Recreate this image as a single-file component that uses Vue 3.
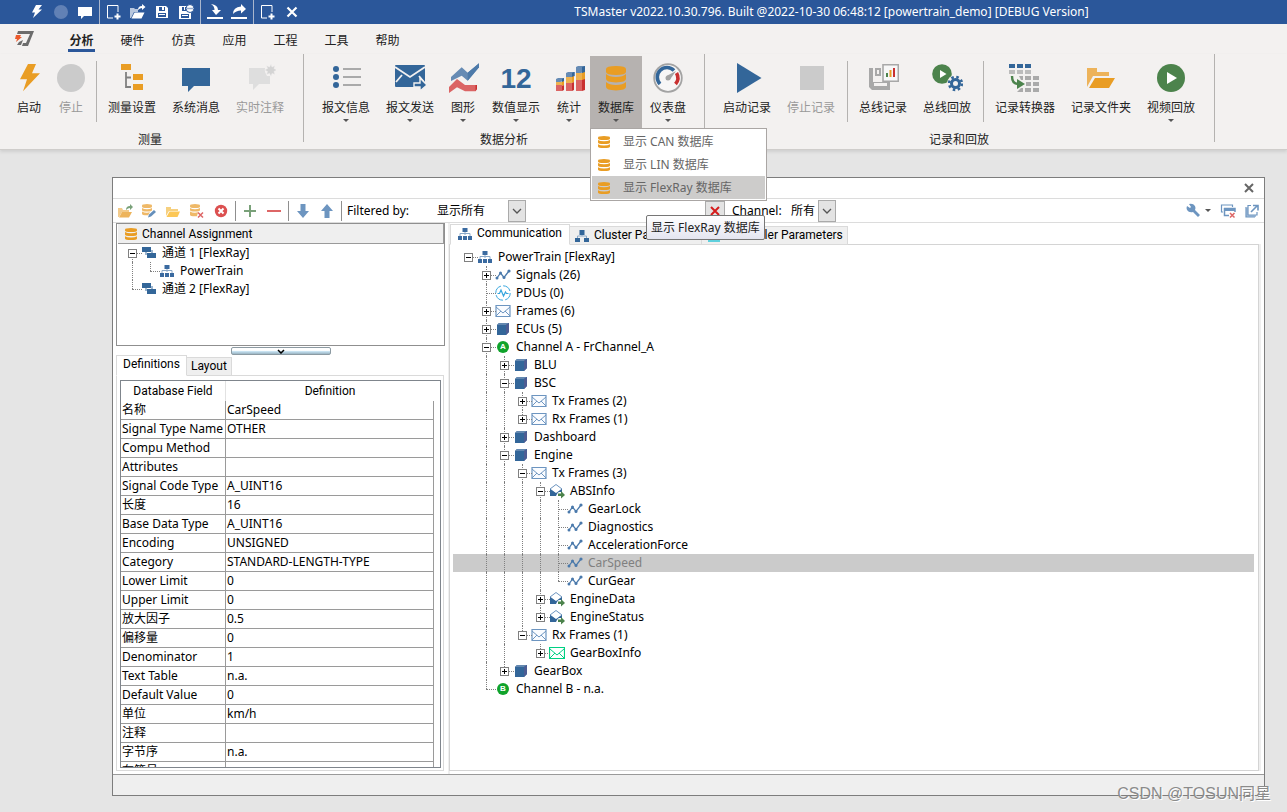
<script setup>
import { ref } from 'vue'

const quickGroups = [
  [['q-bolt', '启动'], ['q-dot', '停止'], ['q-chat', '消息']],
  [['q-new', '新建'], ['q-open', '打开'], ['q-save', '保存'], ['q-saveas', '另存为']],
  [['q-import', '导入'], ['q-export', '导出']],
  [['q-new', '新建窗口'], ['q-close', '关闭']],
]

const menus = ['分析', '硬件', '仿真', '应用', '工程', '工具', '帮助']

const ribbon = [
  {
    title: '测量',
    cls: 'g-measure',
    sections: [
      [
        { label: '启动', icon: 'r-bolt', size: 's2' },
        { label: '停止', icon: 'r-stop', size: 's2', off: true },
      ],
      [
        { label: '测量设置', icon: 'r-tree', size: 's4' },
        { label: '系统消息', icon: 'r-chat', size: 's4' },
        { label: '实时注释', icon: 'r-note', size: 's4', off: true },
      ],
    ],
  },
  {
    title: '数据分析',
    cls: 'g-data',
    sections: [
      [
        { label: '报文信息', icon: 'r-list', size: 's4', drop: true },
        { label: '报文发送', icon: 'r-mail', size: 's4', drop: true },
        { label: '图形', icon: 'r-graph', size: 's2', drop: true },
        { label: '数值显示', digits: '12', size: 's4', drop: true },
        { label: '统计', icon: 'r-stat', size: 's2', drop: true },
        { label: '数据库', icon: 'r-db', size: 's3', drop: true, open: true },
        { label: '仪表盘', icon: 'r-gauge', size: 's3', drop: true },
      ],
    ],
  },
  {
    title: '记录和回放',
    cls: 'g-record',
    sections: [
      [
        { label: '启动记录', icon: 'r-play', size: 's4' },
        { label: '停止记录', icon: 'r-square', size: 's4', off: true },
      ],
      [
        { label: '总线记录', icon: 'r-buslog', size: 's4' },
        { label: '总线回放', icon: 'r-replay', size: 's4' },
      ],
      [
        { label: '记录转换器', icon: 'r-convert', size: 's5' },
        { label: '记录文件夹', icon: 'r-folder', size: 's5' },
        { label: '视频回放', icon: 'r-video', size: 's4', drop: true },
      ],
    ],
  },
]

const dbMenu = ['显示 CAN 数据库', '显示 LIN 数据库', '显示 FlexRay 数据库']

const toolGroups = [
  [['t-open', '打开'], ['t-dbedit', '编辑数据库'], ['t-folder', '文件夹'], ['t-dbdel', '移除数据库'], ['t-cancel', '清空']],
  [['t-plus', '添加'], ['t-minus', '删除']],
  [['t-down', '下移'], ['t-up', '上移']],
]

const node = (label, icon, children = null, open = true) => ({ label, icon, children, open })

const channelRoots = [
  node('通道 1 [FlexRay]', 'i-chan', [node('PowerTrain', 'i-net')]),
  node('通道 2 [FlexRay]', 'i-chan'),
]

const closed = (label, icon) => node(label, icon, [], false)

const dbRoots = [
  node('PowerTrain [FlexRay]', 'i-net', [
    closed('Signals (26)', 'i-sig'),
    node('PDUs (0)', 'i-pdu'),
    closed('Frames (6)', 'i-mail'),
    closed('ECUs (5)', 'i-ecu'),
    node('Channel A - FrChannel_A', 'A', [
      closed('BLU', 'i-ecu'),
      node('BSC', 'i-ecu', [closed('Tx Frames (2)', 'i-mail'), closed('Rx Frames (1)', 'i-mail')]),
      closed('Dashboard', 'i-ecu'),
      node('Engine', 'i-ecu', [
        node('Tx Frames (3)', 'i-mail', [
          node('ABSInfo', 'i-tx', [
            node('GearLock', 'i-sig'),
            node('Diagnostics', 'i-sig'),
            node('AccelerationForce', 'i-sig'),
            node('CarSpeed', 'i-sig'),
            node('CurGear', 'i-sig'),
          ]),
          closed('EngineData', 'i-tx'),
          closed('EngineStatus', 'i-tx'),
        ]),
        node('Rx Frames (1)', 'i-mail', [closed('GearBoxInfo', 'i-rx')]),
      ]),
      closed('GearBox', 'i-ecu'),
    ]),
    node('Channel B - n.a.', 'B'),
  ]),
]

// Turns nested nodes into rows, each with the guide lines of its ancestors.
// A one-letter icon is drawn as a round channel badge.
function flatten(nodes, depth = 0, guides = [], out = []) {
  nodes.forEach((n, i) => {
    const last = i === nodes.length - 1
    out.push({
      label: n.label,
      icon: n.icon,
      guides,
      up: depth > 0 || i > 0,
      down: !last,
      lead: nodes.length > 1 || depth > 0 || !!n.children,
      toggle: n.children ? (n.open ? 'minus' : 'plus') : '',
    })
    if (n.children && n.open) flatten(n.children, depth + 1, [...guides, !last], out)
  })
  return out
}

const channelRows = flatten(channelRoots)
const dbRows = flatten(dbRoots)
const selected = ref('CarSpeed')

const fields = [
  ['名称', 'CarSpeed'],
  ['Signal Type Name', 'OTHER'],
  ['Compu Method', ''],
  ['Attributes', ''],
  ['Signal Code Type', 'A_UINT16'],
  ['长度', '16'],
  ['Base Data Type', 'A_UINT16'],
  ['Encoding', 'UNSIGNED'],
  ['Category', 'STANDARD-LENGTH-TYPE'],
  ['Lower Limit', '0'],
  ['Upper Limit', '0'],
  ['放大因子', '0.5'],
  ['偏移量', '0'],
  ['Denominator', '1'],
  ['Text Table', 'n.a.'],
  ['Default Value', '0'],
  ['单位', 'km/h'],
  ['注释', ''],
  ['字节序', 'n.a.'],
  ['有符号', ''],
]
</script>

<template>
  <div class="app">
    <svg class="sprite" aria-hidden="true">
      <!-- quick access, 16px -->
      <symbol id="q-bolt" viewBox="0 0 16 16"><path d="M7 1h6L9.500 5.500h3.500L4 14l2-5.500H3z" fill="#fff" /></symbol>
      <symbol id="q-dot" viewBox="0 0 16 16"><circle cx="8" cy="8" r="7" fill="#6181b5" /></symbol>
      <symbol id="q-chat" viewBox="0 0 16 16"><path d="M1 3h14v9H7l-3 3v-3H1z" fill="#fff" /></symbol>
      <symbol id="q-new" viewBox="0 0 16 16"><path d="M7 14H1.500V1.500h10.500V8" fill="none" stroke="#fff" /><path d="M11.500 9.500v6M8.500 12.500h6" stroke="#fff" stroke-width="2" /></symbol>
      <symbol id="q-open" viewBox="0 0 16 16"><path d="M0 4h4l1 1h3v3H4l-3 6H0z" fill="#b8c7de" /><path d="M4.500 8.500h10l-3 6H1.500z" fill="#fff" /><path d="M8 6q0-4 4-4V0l3.500 3L12 6V4q-2 0-4 2z" fill="#fff" /></symbol>
      <symbol id="q-save" viewBox="0 0 16 16"><path d="M2 2h10l2 2v10H2z" fill="#fff" /><path d="M5 3h6v4H5zM4 9h8v4H4z" fill="#2b579a" /><path d="M8 3h2v3H8zM5 10h6v1H5z" fill="#fff" /></symbol>
      <symbol id="q-saveas" viewBox="0 0 16 16"><path d="M1 2h10v6h2v7H1z" fill="#fff" /><path d="M4 3h4v4H4zM3 10h8v4H3z" fill="#2b579a" /><path d="M6 3h1v3H6zM4 11h6v1H4z" fill="#fff" /><circle cx="12" cy="4.500" r="4" fill="#fff" stroke="#2b579a" /><path d="M9.500 4.500h1M11.500 4.500h1M13.500 4.500h1" stroke="#2b579a" stroke-width="1.300" /></symbol>
      <symbol id="q-import" viewBox="0 0 16 16"><path d="M0 13h16v2H0z" fill="#fff" /><path d="M4 0q7 1 7 6h3l-5 5-4-5h2.500q0-4-3.500-6z" fill="#fff" /></symbol>
      <symbol id="q-export" viewBox="0 0 16 16"><path d="M0 13h16v2H0z" fill="#fff" /><path d="M2 10q0-7 8-7.500V0l5 5-5 4.500V6.500Q5 6.500 2 10z" fill="#fff" /></symbol>
      <symbol id="q-close" viewBox="0 0 16 16"><path d="M3.500 3.500l9 9M12.500 3.500l-9 9" stroke="#fff" stroke-width="2.200" /></symbol>

      <!-- ribbon, 32px -->
      <symbol id="r-bolt" viewBox="0 0 32 32"><path d="M15 2h8l-4 9.300h8L10 29.300l4-12H7z" fill="#e99d24" /></symbol>
      <symbol id="r-stop" viewBox="0 0 32 32"><circle cx="16" cy="16" r="14" fill="#cbcbcb" /></symbol>
      <symbol id="r-tree" viewBox="0 0 32 32"><path d="M5 2h10v6H5zM17 12h10v6H17zM17 22h10v6H17z" fill="#e99d24" /><path d="M10 10v15h5M10 15.500h5" fill="none" stroke="#808080" stroke-width="1.800" /></symbol>
      <symbol id="r-chat" viewBox="0 0 32 32"><path d="M2 6h28v18H14l-6 6v-6H2z" fill="#336699" /></symbol>
      <symbol id="r-note" viewBox="0 0 32 32"><path d="M5 6h16v4l2 4h6v8H15l-6 6v-6H5z" fill="#dedede" /><path d="M29 14v8h-3v-8z" fill="#f3f1f0" /><path d="M27 2l1 3 3-1.500-1 3 3 1.500-3 1.500 1 3-3-1-1 3-1.500-3-3 1 1-3-3-1.500 3-1.500-1-3 3 1.500z" fill="#d4d4d4" stroke="#f3f1f0" stroke-width=".5" /></symbol>
      <symbol id="r-list" viewBox="0 0 32 32"><g fill="#336699"><circle cx="6" cy="7" r="3" /><circle cx="6" cy="15" r="3" /><circle cx="6" cy="23" r="3" /></g><path d="M13 7h18M13 15h18M13 23h18" stroke="#aaa" stroke-width="2" /></symbol>
      <symbol id="r-mail" viewBox="0 0 32 32"><rect x="1" y="3" width="30" height="22" rx="1" fill="#336699" /><path d="M1 5l15 10L31 5M2 20l6-7 M30 20l-5-6" fill="none" stroke="#f3f1f0" stroke-width="1.800" /><path d="M20 21h6v-5l7 7-7 6v-4h-6z" fill="#336699" stroke="#f3f1f0" stroke-width="1.400" /></symbol>
      <symbol id="r-graph" viewBox="0 0 32 32"><path d="M4 15L14.700 5.300l6 5.400L32 1.300v4L20.700 18.700l-6-5L4 19z" fill="#668bb4" /><path d="M20.700 10.700L32 1.300v4L20.700 18.700z" fill="#4d7aa9" /><path d="M2 25l8-8 8 6h12v4l-1.500 2.300H18l-8-4L2 31z" fill="#db6464" /><path d="M28.500 23H30v4l-1.500 2.300z" fill="#c93030" /></symbol>
      <symbol id="r-stat" viewBox="0 0 32 32">
        <path d="M3 17l2-1h6v3l-8 2zM13 11l2-1h7v4l-9 3zM23 5l2-1h7v6l-9 2z" fill="#668bb4" />
        <path d="M3 20h6v4H3zM13 15h6v6h-6zM23 11h6v8h-6z" fill="#edb14f" />
        <path d="M3 23h6v6H3zM13 21h6v8h-6zM23 18h6v11h-6z" fill="#db6464" />
        <path d="M9 17l2-1v4l-2 1zM19 11l2-1v5l-2 1zM29 5l3-1v7l-3 1z" fill="#336699" />
        <path d="M9 20l2-1v4l-2 1zM19 15l2-1v6l-2 1zM29 11l3-1v8l-3 1z" fill="#e99d24" />
        <path d="M9 24l2-1v5l-2 1zM19 21l2-1v8l-2 1zM29 18l3-1v11l-3 1z" fill="#c93030" />
      </symbol>
      <symbol id="r-db" viewBox="0 0 32 32"><g fill="#e99d24"><path d="M6 7q0-3 10-3t10 3v3q0 3-10 3T6 10z" /><path d="M6 12q3 3 10 3t10-3v5q0 3-10 3.500Q6 20 6 17z" /><path d="M6 20q3 3 10 3t10-3v5q0 3-10 3.500Q6 28 6 25z" /></g></symbol>
      <symbol id="r-gauge" viewBox="0 0 32 32"><circle cx="16" cy="16" r="13.800" fill="#f7f6f6" stroke="#a3a3a3" stroke-width="1.800" /><path d="M8 22A9.500 9.500 0 0 1 22 8.500" fill="none" stroke="#336699" stroke-width="3.600" /><path d="M24.500 11A9.500 9.500 0 0 1 23.500 22" fill="none" stroke="#c93030" stroke-width="3.600" /><path d="M14.500 14L24 9l-6 8.500z" fill="#a3a3a3" /><circle cx="16" cy="16" r="2.500" fill="#a3a3a3" /></symbol>
      <symbol id="r-play" viewBox="0 0 32 32"><path d="M6 1l24.500 15L6 31z" fill="#336699" /></symbol>
      <symbol id="r-square" viewBox="0 0 32 32"><path d="M5 4h24v24H5z" fill="#cbcbcb" /></symbol>
      <symbol id="r-buslog" viewBox="0 0 32 32"><path d="M2 6h4v14h17v8H5l-3-3zM8 6h6v8H8z" fill="#a8a8a8" /><path d="M10 8h2v4h-2zM7 21h13v3H7z" fill="#f3f1f0" /><path d="M16 2.800h15.300v16.500H16z" fill="#f7f7f7" stroke="#a8a8a8" stroke-width="1.600" /><path d="M19 11h2v4h-2z" fill="#4c834c" /><path d="M22.500 8h2v7h-2z" fill="#e99d24" /><path d="M26 6h2v9h-2z" fill="#c93030" /></symbol>
      <symbol id="r-replay" viewBox="0 0 32 32"><circle cx="11" cy="12" r="9.800" fill="#4c834c" /><path d="M9 8l6.500 4L9 16z" fill="#fff" /><circle cx="24.500" cy="21.500" r="8.500" fill="#f3f1f0" /><circle cx="24.500" cy="21.500" r="6.400" fill="none" stroke="#336699" stroke-width="2.600" stroke-dasharray="2.500 2.526" /><circle cx="24.500" cy="21.500" r="4" fill="none" stroke="#336699" stroke-width="3" /></symbol>
      <symbol id="r-convert" viewBox="0 0 32 32"><path d="M0 2h6v4H0zM8 2h6v4H8zM16 2h6v4h-6z" fill="#336699" /><path d="M0 8h6v4H0zM8 8h6v4H8zM16 8h6v4h-6z" fill="#bcbcbc" /><path d="M10 14h4v4h-2zM16 14h6v4h-6zM24 14h6v4h-6zM17 20h5v4h-5zM24 20h6v4h-6zM8 30l4-4h2v4zM16 26h6v4h-6zM24 26h6v4h-6z" fill="#aaa" /><path d="M3 14q0 8 6 8" fill="none" stroke="#4c834c" stroke-width="2.400" /><path d="M8 17l8 5-8 5z" fill="#4c834c" /></symbol>
      <symbol id="r-folder" viewBox="0 0 32 32"><path d="M2 6h10v4h12v4H8L2 25z" fill="#edb35a" /><path d="M10 16h20l-6 10H4z" fill="#e99d24" /></symbol>
      <symbol id="r-video" viewBox="0 0 32 32"><circle cx="16" cy="16" r="14" fill="#4c834c" /><path d="M12 10l10 6-10 6z" fill="#fff" /></symbol>

      <!-- database toolbar and trees, 16px -->
      <symbol id="i-db" viewBox="0 0 16 16"><g fill="#e99d24"><path d="M2 3.500Q2 2 8 2t6 1.500v1Q14 6 8 6T2 4.500z" /><path d="M2 6q2 1.200 6 1.200T14 6v2.500q0 1.500-6 1.500T2 8.500z" /><path d="M2 10.200q2 1.200 6 1.200t6-1.200v2.300q0 1.500-6 1.500t-6-1.500z" /></g></symbol>
      <symbol id="t-open" viewBox="0 0 16 16"><path d="M1 5h4l1 2h6v2H5l-3 5H1z" fill="#f2ca8a" /><path d="M5 9h10l-3 5.500H2z" fill="#edb45c" /><path d="M9 7q0-4 4-4V1l3 3-3 3V5q-2 0-4 2z" fill="#79a179" /></symbol>
      <symbol id="t-dbedit" viewBox="0 0 16 16"><g fill="#efb968"><path d="M1 2.500Q1 1 6 1t5 1.500v1Q11 5 6 5T1 3.500z" /><path d="M1 5q2 1.200 5 1.200T11 5v2q0 1.500-5 1.500T1 7z" /><path d="M1 8.500q2 1.200 5 1.200l3-.5-2 3H6q-5 0-5-1.500z" /></g><path d="M7 14.500l1-3L13 7l2 2-5 4.500z" fill="#658fbb" /></symbol>
      <symbol id="t-folder" viewBox="0 0 16 16"><path d="M1 4h5v2h7v2H4l-3 5z" fill="#f6d07f" /><path d="M4.500 8.500H15L12.500 14H1.500z" fill="#fcc756" /></symbol>
      <symbol id="t-dbdel" viewBox="0 0 16 16"><g fill="#efb968"><path d="M1 2.500Q1 1 6 1t5 1.500v1Q11 5 6 5T1 3.500z" /><path d="M1 5q2 1.200 5 1.200T11 5v2q0 1.500-5 1.500T1 7z" /><path d="M1 8.500q2 1.200 5 1.200l3-.5-1 4H6q-5 0-5-1.500z" /></g><path d="M9 9.500l5 5M14 9.500l-5 5" stroke="#d66" stroke-width="1.500" /></symbol>
      <symbol id="t-cancel" viewBox="0 0 16 16"><circle cx="8" cy="8" r="6.200" fill="#dc5050" /><path d="M5.500 5.500l5 5M10.500 5.500l-5 5" stroke="#fff" stroke-width="2" /></symbol>
      <symbol id="t-plus" viewBox="0 0 16 16"><path d="M8 2v12M2 8h12" stroke="#79a179" stroke-width="2" /></symbol>
      <symbol id="t-minus" viewBox="0 0 16 16"><path d="M1 8h14" stroke="#d66" stroke-width="2" /></symbol>
      <symbol id="t-down" viewBox="0 0 16 16"><path d="M5.500 1h5v7H14l-6 7-6-7h3.500z" fill="#6d95c0" /></symbol>
      <symbol id="t-up" viewBox="0 0 16 16"><path d="M5.500 15h5V8H14L8 1 2 8h3.500z" fill="#6d95c0" /></symbol>
      <symbol id="t-wrench" viewBox="0 0 16 16"><path d="M2 3l3 2 1-1-2-3q4-1 6 2 1 2 0 4l5 5-2 2-5-5q-4 1-6-2-1-2 0-4z" fill="#6d95c0" /></symbol>
      <symbol id="t-winx" viewBox="0 0 16 16"><path d="M3 9H1.500V2h11V4" fill="none" stroke="#6d95c0" stroke-width="1.200" /><path d="M4 5.500h11V9M4.500 5v7.500H9" fill="none" stroke="#6d95c0" stroke-width="1.500" /><path d="M4 5h11v3H4z" fill="#6d95c0" /><path d="M10 10l4.500 4.500M14.500 10L10 14.500" stroke="#d66" stroke-width="1.500" /></symbol>
      <symbol id="t-pop" viewBox="0 0 16 16"><path d="M4 4v8h8v2H2V5z" fill="#a9c1dc" /><path d="M7 2.500H4v9.500h9V9M2 4v10h9" fill="none" stroke="#6d95c0" stroke-width="1.200" /><path d="M7 9l6-6M9 2.500h5v5" fill="none" stroke="#6d95c0" stroke-width="1.600" /></symbol>
      <symbol id="i-chan" viewBox="0 0 16 16"><path d="M1 2h9v5H1zM6 8h9v5H6z" fill="#336699" /><path d="M10 5h2v3h-2zM4 7h2v3H4z" fill="#9db6cf" /></symbol>
      <symbol id="i-net" viewBox="0 0 16 16"><path d="M8 5v4M3 10V7.500h10V10" fill="none" stroke="#8aa8c8" /><path d="M5.500 2h5v4h-5zM1 10h4v4H1zM6 10h4v4H6zM11 10h4v4h-4z" fill="#3a6aa0" /></symbol>
      <symbol id="i-net2" viewBox="0 0 16 16"><path d="M8 5v3M3.500 10V8h9v2" fill="none" stroke="#8aa8c8" /><path d="M5.500 2h5v5h-5zM1 10h5v4H1zM10 10h5v4h-5z" fill="#336699" /></symbol>
      <symbol id="i-sig" viewBox="0 0 16 16"><path d="M2 11l3.500-5L9 10.500l5-6.500" fill="none" stroke="#4a79ab" stroke-width="1.300" /><g fill="#4a79ab"><circle cx="2" cy="11" r="1.500" /><circle cx="5.500" cy="6" r="1.500" /><circle cx="9" cy="10.500" r="1.500" /><circle cx="14" cy="4" r="1.600" /></g></symbol>
      <symbol id="i-pdu" viewBox="0 0 16 16"><circle cx="8" cy="8" r="7.200" fill="none" stroke="#37a6de" stroke-dasharray="9 2.300" /><path d="M2.500 8.500h2L6 5l2.500 6L10.500 7l1 1.500h2" fill="none" stroke="#37a6de" stroke-width="1.200" /></symbol>
      <symbol id="i-mail" viewBox="0 0 16 16"><path d="M1 2.500h14v11H1z" fill="#fafcff" stroke="#6d95c0" stroke-width="1.200" /><path d="M1 4l7 6 7-6M1 13l5-5M15 13l-5-5" fill="none" stroke="#6d95c0" /></symbol>
      <symbol id="i-rx" viewBox="0 0 16 16"><path d="M.5 2.500h15v11H.5z" fill="#fff" stroke="#00d084" stroke-width="1.200" /><path d="M1 4l7 6 7-6M1 13l5-5M15 13l-5-5" fill="none" stroke="#00d084" /></symbol>
      <symbol id="i-tx" viewBox="0 0 16 16"><path d="M1 6l6-4.500L13 6l-6 5z" fill="#fff" stroke="#6d95c0" /><path d="M1 6l6 4 6-4v3H9l-2 4H1z" fill="#336699" /><path d="M9 10.500h3V8l4 4-4 3.500V13H9z" fill="#4c834c" /></symbol>
      <symbol id="i-ecu" viewBox="0 0 16 16"><path d="M2 4l2-2h10v9l-3 3H2z" fill="#336699" /><path d="M2 4l2-2h10l-3 2z" fill="#6488b0" /><path d="M11 4l3-2v9l-3 3z" fill="#4d5c93" /></symbol>
      <symbol id="i-ctrl" viewBox="0 0 16 16"><path d="M2 3h12v11H2z" fill="#5fd0dd" /></symbol>
      <symbol id="i-chevron" viewBox="0 0 16 16"><path d="M4 6l4 4 4-4" fill="none" stroke="#555" stroke-width="1.300" /></symbol>
    </svg>

    <header class="titlebar">
      <div v-for="(g, gi) in quickGroups" :key="gi" class="quick">
        <button v-for="q in g" :key="q[1]" type="button" :aria-label="q[1]">
          <svg class="i16"><use :href="'#' + q[0]" /></svg>
        </button>
      </div>
      <h1>TSMaster v2022.10.30.796. Built @2022-10-30 06:48:12 [powertrain_demo] [DEBUG Version]</h1>
    </header>

    <nav class="menubar">
      <svg class="logo" viewBox="0 0 20 16" aria-hidden="true">
        <path d="M3 0h16l-6 15H7l1-3h3l4-9H2z" fill="#6c6c6c" />
        <path d="M1 4h5L5 6h2l-6 5 1-3H0z" fill="#ec5a2c" />
        <path d="M4 11l4-2-2 5H2z" fill="#6c6c6c" />
      </svg>
      <button v-for="(m, i) in menus" :key="m" type="button" :class="{ active: i === 0 }"><span>{{ m }}</span></button>
    </nav>

    <section class="ribbon">
      <div v-for="g in ribbon" :key="g.title" class="group" :class="g.cls">
        <div class="sections">
          <div v-for="(s, si) in g.sections" :key="si" class="section">
            <div v-for="b in s" :key="b.label" class="cell" :class="b.size">
              <button type="button" class="big" :class="{ open: b.open }" :disabled="b.off">
                <b v-if="b.digits" class="digits">{{ b.digits }}</b>
                <svg v-else class="i32"><use :href="'#' + b.icon" /></svg>
                <span>{{ b.label }}</span>
                <i v-if="b.drop" class="caret"></i>
              </button>
              <div v-if="b.open" class="popup" role="menu">
                <button v-for="(d, di) in dbMenu" :key="d" type="button" role="menuitem" :class="{ hover: di === 2 }">
                  <svg class="i16"><use href="#i-db" /></svg><span>{{ d }}</span>
                </button>
                <div class="tip" role="tooltip">{{ dbMenu[2] }}</div>
              </div>
            </div>
          </div>
        </div>
        <div class="group-title">{{ g.title }}</div>
      </div>
    </section>

    <main class="desktop">
      <section class="window">
        <div class="caption">
          <button type="button" aria-label="关闭窗口">
            <svg viewBox="0 0 12 12"><path d="M2 2l8 8M10 2l-8 8" stroke="#666" stroke-width="2" /></svg>
          </button>
        </div>

        <div class="toolbar">
          <div v-for="(g, gi) in toolGroups" :key="gi" class="tools">
            <button v-for="t in g" :key="t[0]" type="button" :aria-label="t[1]">
              <svg class="i16"><use :href="'#' + t[0]" /></svg>
            </button>
          </div>
          <label for="filter" class="filter-label">Filtered by:</label>
          <div class="combo filter">
            <select id="filter"><option>显示所有</option></select>
            <svg class="drop"><use href="#i-chevron" /></svg>
          </div>
          <input class="search" type="text" aria-label="过滤" />
          <button type="button" class="clear" aria-label="清除过滤">
            <svg viewBox="0 0 12 12"><path d="M2 2l8 8M10 2l-8 8" stroke="#d51c1c" stroke-width="2" /></svg>
          </button>
          <label for="channel" class="channel-label">Channel:</label>
          <div class="combo channel">
            <select id="channel"><option>所有</option></select>
            <svg class="drop"><use href="#i-chevron" /></svg>
          </div>
          <div class="right-tools">
            <button type="button" class="wrench" aria-label="设置"><svg class="i16"><use href="#t-wrench" /></svg><i class="caret"></i></button>
            <button type="button" aria-label="关闭所有"><svg class="i16"><use href="#t-winx" /></svg></button>
            <button type="button" aria-label="弹出"><svg class="i16"><use href="#t-pop" /></svg></button>
          </div>
        </div>

        <div class="body">
          <aside class="left">
            <div class="channels">
              <div class="channels-head"><svg class="i16"><use href="#i-db" /></svg>Channel Assignment</div>
              <ul class="tree small">
                <li v-for="r in channelRows" :key="r.label">
                  <i v-for="(g, gi) in r.guides" :key="gi" class="guide" :class="{ line: g }"></i>
                  <i class="guide own" :class="{ up: r.up, down: r.down, lead: r.lead }"><b v-if="r.toggle" class="box" :class="r.toggle"></b></i>
                  <svg class="i16"><use :href="'#' + r.icon" /></svg><span>{{ r.label }}</span>
                </li>
              </ul>
            </div>
            <button type="button" class="splitter" aria-label="折叠"><svg viewBox="0 0 8 5"><path d="M1 1l3 3 3-3" fill="none" stroke="#000" stroke-width="1.500" /></svg></button>
            <div class="tabs" role="tablist">
              <button type="button" role="tab" class="on">Definitions</button>
              <button type="button" role="tab">Layout</button>
            </div>
            <div class="sheet">
              <div class="grid">
                <table>
                  <thead><tr><th class="name" scope="col">Database Field</th><th scope="col">Definition</th></tr></thead>
                  <tbody><tr v-for="f in fields" :key="f[0]"><td>{{ f[0] }}</td><td>{{ f[1] }}</td></tr></tbody>
                </table>
              </div>
            </div>
          </aside>

          <section class="right">
            <div class="tabs wide" role="tablist">
              <button type="button" role="tab" class="on"><svg class="i16"><use href="#i-net" /></svg>Communication</button>
              <button type="button" role="tab"><svg class="i16"><use href="#i-net2" /></svg>Cluster Parameters</button>
              <button type="button" role="tab"><svg class="i16"><use href="#i-ctrl" /></svg>Controller Parameters</button>
            </div>
            <div class="tree-pane">
              <ul class="tree">
                <li v-for="(r, ri) in dbRows" :key="ri" :class="{ selected: r.label === selected }" @click="selected = r.label">
                  <i v-for="(g, gi) in r.guides" :key="gi" class="guide" :class="{ line: g }"></i>
                  <i class="guide own" :class="{ up: r.up, down: r.down, lead: r.lead }"><b v-if="r.toggle" class="box" :class="r.toggle"></b></i>
                  <b v-if="r.icon.length === 1" class="badge">{{ r.icon }}</b>
                  <svg v-else class="i16"><use :href="'#' + r.icon" /></svg>
                  <span>{{ r.label }}</span>
                </li>
              </ul>
            </div>
          </section>
        </div>
        <footer class="status"></footer>
      </section>
    </main>
    <div class="mark">CSDN @TOSUN同星</div>
  </div>
</template>

<style>
body { overflow: hidden; }
</style>

<style scoped>
* { box-sizing: border-box; }
.app {
  position: relative;
  height: 100vh;
  display: flex;
  flex-direction: column;
  background: #e5e5e5;
  color: #000;
  font: 12px/18px "Noto Sans", "Noto Sans CJK SC", sans-serif;
}
.sprite { position: absolute; width: 0; height: 0; }
.i16 { width: 16px; height: 16px; flex: none; }
.i32 { width: 32px; height: 32px; flex: none; overflow: visible; }
button { font: inherit; color: inherit; background: none; border: 0; padding: 0; }
svg { display: block; }

.titlebar { display: flex; height: 24px; background: #2b579a; padding-left: 25px; color: #fff; flex: none; }
.quick { display: flex; align-items: center; }
.quick + .quick { border-left: 1px solid #a9b6cd; margin-left: 2px; padding-left: 2px; }
.quick button { width: 24px; height: 24px; display: grid; place-items: center; }
.titlebar h1 { flex: 1; margin: 0; padding-left: 72px; text-align: center; font: inherit; line-height: 24px; white-space: nowrap; }

.menubar { display: flex; height: 30px; padding-left: 15px; background: #f3f1f0; flex: none; }
.logo { width: 20px; height: 16px; margin: 7px 21px 0 0; }
.menubar button { width: 51px; height: 28px; color: #222; display: flex; justify-content: center; }
.menubar span { height: 28px; line-height: 34px; padding: 0 1px; }
.menubar .active span { font-weight: bold; border-bottom: 3px solid #2b579a; }

.ribbon { display: flex; height: 96px; background: #f3f1f0; border-bottom: 1px solid #cfcdcb; box-shadow: 0 2px 3px #cfcfcf; flex: none; color: #222; position: relative; z-index: 2; }
.group { height: 88px; display: flex; flex-direction: column; border-right: 1px solid #b4b2b0; padding: 0 10px; }
.g-measure { padding-left: 8px; padding-right: 11px; }
.g-record { padding-right: 11px; }
.sections { display: flex; height: 74px; }
.section { display: flex; }
.section + .section::before { content: ""; width: 1px; height: 61px; margin: 7px 3px 0 4px; background: #b4b2b0; }
.cell { position: relative; }
.s2 { width: 42px; }
.s3 { width: 52px; }
.s4 { width: 64px; }
.s5 { width: 76px; }
.big { width: 100%; height: 72px; margin-top: 2px; padding-top: 6px; display: flex; flex-direction: column; align-items: center; }
.big span { line-height: 18px; margin-top: 5px; white-space: nowrap; }
.big:disabled { color: #999; }
.big.open { background: #b6b2b0; }
.digits { height: 32px; font: bold 28px/34px "Liberation Sans", Arial, sans-serif; color: #336699; }
.caret { border: 3px solid transparent; border-top-color: #555; border-bottom: 0; width: 0; height: 0; }
.big .caret { margin-top: 2px; }
.group-title { text-align: center; line-height: 18px; margin-top: 3px; }

.popup { position: absolute; top: 74px; left: 0; width: 177px; background: #fff; border: 1px solid #aaa6a4; padding: 1px; z-index: 3; }
.popup button { display: flex; align-items: center; width: 100%; height: 23px; padding-left: 4px; color: #666; white-space: nowrap; }
.popup button span { margin-left: 11px; }
.popup .hover { background: #cdcccb; }
.tip { position: absolute; left: 55px; top: 86px; height: 25px; padding: 0 4px; line-height: 23px; white-space: nowrap; color: #222; background: linear-gradient(#fff, #e4e5f0); border: 1px solid #767676; border-radius: 2px; }

.desktop { flex: 1; min-height: 0; display: flex; padding: 27px 22px 16px 112px; }
.window { flex: 1; min-width: 0; display: flex; flex-direction: column; background: #fff; border: 1px solid #7d7d7d; }
.caption { height: 21px; flex: none; display: flex; justify-content: flex-end; align-items: center; padding-right: 9px; border-bottom: 1px solid #dcdcdc; }
.caption button, .caption svg { width: 12px; height: 12px; }
.toolbar { height: 24px; flex: none; display: flex; align-items: center; border-bottom: 1px solid #dcdcdc; }
.tools { display: flex; align-items: center; height: 20px; padding-right: 2px; border-right: 1px solid #8f8f8f; }
.tools + .tools { padding-left: 2px; }
.tools button, .right-tools button { width: 24px; height: 20px; display: grid; place-items: center; }
.filter-label { margin-left: 5px; width: 89px; white-space: nowrap; }
.channel-label { margin-left: 7px; width: 58px; white-space: nowrap; }
.combo { display: grid; height: 22px; flex: none; }
.combo > * { grid-area: 1 / 1; }
.filter { width: 90px; }
.channel { width: 46px; }
.combo select { appearance: none; font: inherit; color: #000; border: 0; background: #fff; padding: 0 0 0 1px; width: 100%; }
.combo .drop { justify-self: end; width: 18px; height: 22px; padding: 2px 0; background: #e3e3e3; border: 1px solid #aaa; pointer-events: none; }
.search { width: 179px; height: 20px; border: 0; background: #fff; font: inherit; padding: 0; }
.clear { width: 20px; height: 20px; background: #e3e3e3; border: 1px solid #aaa; display: grid; place-items: center; }
.clear svg { width: 12px; height: 12px; }
.right-tools { margin-left: auto; display: flex; }
.right-tools .wrench { width: 36px; display: flex; align-items: center; gap: 4px; padding-left: 5px; }

.body { flex: 1; min-height: 0; display: flex; background: #fff; }
.left { width: 335px; flex: none; display: flex; flex-direction: column; padding: 0 3px 3px; }
.channels { height: 123px; flex: none; border: 1px solid #8f8f8f; }
.channels-head { display: flex; align-items: center; gap: 3px; height: 20px; margin-left: 1px; padding-left: 5px; background: #efefef; border: solid #9a9a9a; border-width: 0 1px 1px 0; font-family: Roboto, sans-serif; }
.splitter { align-self: center; width: 100px; height: 8px; margin-top: 1px; border: 1px solid #8c9aa2; border-radius: 2px; background: linear-gradient(#fff 40%, #c3dfef 60%, #9ab4c2); display: grid; place-items: center; flex: none; }
.splitter svg { width: 8px; height: 5px; }

.tabs { display: flex; align-items: flex-end; height: 21px; flex: none; position: relative; z-index: 1; font-family: Roboto, sans-serif; }
.tabs button { height: 19px; background: #efefef; border: 1px solid #dadada; border-left: 0; padding: 0 4px; line-height: 17px; white-space: nowrap; display: flex; align-items: center; }
.tabs .on { height: 21px; background: #fff; border-left: 1px solid #dadada; border-bottom-color: #fff; padding: 0 6px 2px; }
.sheet { flex: 1; min-height: 0; display: flex; margin-top: -1px; margin-right: 1px; padding: 4px 2px 2px 3px; border: 1px solid #dadada; }
.grid { flex: 1; overflow: hidden; border: 1px solid #7f858c; padding-right: 6px; }
table { width: 100%; table-layout: fixed; border-collapse: separate; border-spacing: 0; }
th { font-weight: normal; height: 20px; padding: 0; line-height: 18px; font-family: Roboto, sans-serif; }
.name { width: 105px; border-right: 1px solid #e2e2e2; }
td { height: 19px; padding: 0 1px; line-height: 18px; border: solid #9a9a9a; border-width: 0 1px 1px 0; white-space: nowrap; }

.right { flex: 1; min-width: 0; display: flex; flex-direction: column; padding: 0 5px 3px 0; border-left: 2px solid #efefef; }
.right .tabs { height: 22px; }
.wide button { padding: 0 4px; }
.wide .on { height: 21px; width: 120px; padding: 0 6px 2px; }
.wide .i16 { margin-right: 4px; }
.tree-pane { flex: 1; min-height: 0; margin-top: -1px; margin-left: -1px; padding: 3px 4px 0 3px; border: 1px solid #d4d4d4; box-shadow: 2px 0 #efefef; }

.tree { list-style: none; margin: 0; padding: 0; }
.tree li { display: flex; align-items: center; height: 18px; padding-left: 6px; white-space: nowrap; }
.tree li > span { margin-left: 5px; }
.tree .selected { background: #cbcbcb; color: #808080; }
.badge { width: 12px; height: 12px; margin: 0 2px; flex: none; border-radius: 50%; background: #10a32b; color: #fff; font: bold 8px/12px "Liberation Sans", Arial, sans-serif; text-align: center; }
.guide { width: 18px; height: 18px; flex: none; display: block; position: relative; }
.guide.line::before, .guide.own::before { content: ""; position: absolute; left: 9px; top: 0; height: 18px; }
.guide.line::before, .guide.up::before, .guide.down::before { border-left: 1px dotted #808080; }
.guide.own.up:not(.down)::before { height: 9px; }
.guide.own.down:not(.up)::before { top: 9px; height: 9px; }
.guide.lead::after { content: ""; position: absolute; left: 9px; top: 9px; width: 10px; border-top: 1px dotted #808080; }
.box { position: absolute; left: 5px; top: 5px; width: 9px; height: 9px; border: 1px solid #808080; background: linear-gradient(#000, #000) center / 5px 1px no-repeat, #fff; z-index: 1; }
.box.plus { background: linear-gradient(#000, #000) center / 5px 1px no-repeat, linear-gradient(#000, #000) center / 1px 5px no-repeat, #fff; }

.status { height: 21px; flex: none; background: #efefef; border-top: 1px solid #9a9a9a; }
.mark { position: absolute; right: 16px; bottom: 8px; font: 16px/20px "Liberation Sans", "Noto Sans CJK SC", sans-serif; color: #8b8b8b; text-shadow: 1px 1px #fff; white-space: nowrap; z-index: 5; }
</style>
